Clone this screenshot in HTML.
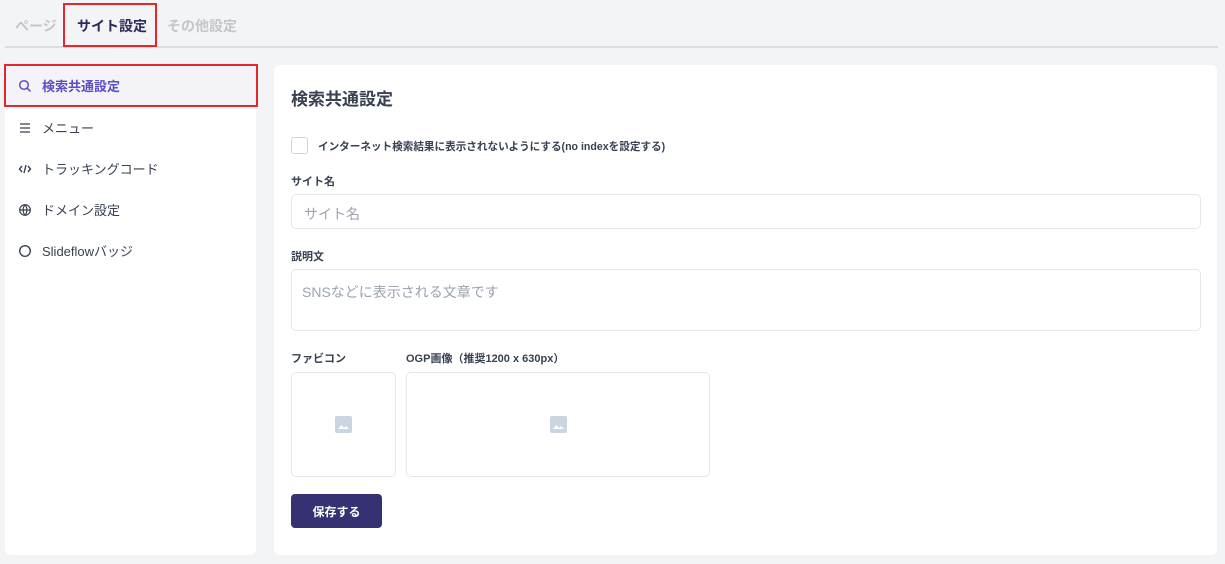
<!DOCTYPE html>
<html><head><meta charset="utf-8"><style>
*{box-sizing:border-box;margin:0;padding:0}
body{width:1225px;height:564px;background:#f3f4f6;font-family:"Liberation Sans","Noto Sans CJK JP",sans-serif;position:relative;overflow:hidden;color:#374151}
.a{position:absolute}
.tab{font-size:14px;font-weight:bold;color:#c4c6cc;top:16px}
.panel{background:#fff;border-radius:6px}
.item{position:absolute;left:18px;font-size:13px;color:#374151;display:flex;align-items:center;gap:10px}
.item svg{width:14px;height:14px}
.lbl{font-size:11px;font-weight:bold;color:#374151}
.inp{border:1px solid #e5e7eb;border-radius:5px;background:#fff}
.ph{color:#9ca3af;font-size:14px}
.imgbox{border:1px solid #e5e7eb;border-radius:5px;display:flex;align-items:center;justify-content:center}
.ic{width:17px;height:17px;background:#cbd5e1;border-radius:2px;position:relative;overflow:hidden}
</style></head><body>
<div class="a tab" style="left:15px">ページ</div>
<div class="a tab" style="left:77px;color:#2e2a5e">サイト設定</div>
<div class="a tab" style="left:167px">その他設定</div>
<div class="a" style="left:5px;top:46px;width:1213px;height:2px;background:#dcdde1"></div>
<div class="a" style="left:63px;top:3px;width:94px;height:44px;border:2px solid #e5262b"></div>

<div class="a panel" style="left:5px;top:65px;width:251px;height:490px"></div>
<div class="a" style="left:5px;top:65px;width:251px;height:41px;background:#f3f3f8"></div>
<div class="item" style="top:76px;color:#5b4fc4;font-weight:bold"><svg viewBox="0 0 14 14" fill="none" stroke="#5b4fc4" stroke-width="1.5"><circle cx="6" cy="6" r="4.3"/><path d="M9.2 9.2L12.5 12.5"/></svg>検索共通設定</div>
<div class="a" style="left:4px;top:64px;width:254px;height:43px;border:2px solid #e5262b"></div>
<div class="item" style="top:118px"><svg viewBox="0 0 14 14" stroke="#374151" stroke-width="1.2"><path d="M2 3h10M2 7h10M2 11h10"/></svg>メニュー</div>
<div class="item" style="top:159px"><svg viewBox="0 0 14 14" fill="none" stroke="#374151" stroke-width="1.4"><path d="M4 4L1.5 7 4 10M10 4l2.5 3L10 10M8 3L6 11"/></svg>トラッキングコード</div>
<div class="item" style="top:200px"><svg viewBox="0 0 14 14" fill="none" stroke="#374151" stroke-width="1.2"><circle cx="7" cy="7" r="5.3"/><path d="M1.7 7h10.6M7 1.7c-2.5 3-2.5 7.6 0 10.6M7 1.7c2.5 3 2.5 7.6 0 10.6"/></svg>ドメイン設定</div>
<div class="item" style="top:241px"><svg viewBox="0 0 14 14" fill="none" stroke="#374151" stroke-width="1.4"><circle cx="7" cy="7" r="5.3"/></svg>Slideflowバッジ</div>

<div class="a panel" style="left:274px;top:65px;width:943px;height:490px"></div>
<div class="a" style="left:291px;top:85px;font-size:17px;font-weight:bold;color:#374151">検索共通設定</div>
<div class="a" style="left:291px;top:137px;width:17px;height:17px;border:1px solid #d1d5db;border-radius:3px"></div>
<div class="a lbl" style="left:318px;top:139px;font-size:10.6px">インターネット検索結果に表示されないようにする(no indexを設定する)</div>
<div class="a lbl" style="left:291px;top:173px">サイト名</div>
<div class="a inp" style="left:291px;top:194px;width:910px;height:35px"></div>
<div class="a ph" style="left:304px;top:204px">サイト名</div>
<div class="a lbl" style="left:291px;top:248px">説明文</div>
<div class="a inp" style="left:291px;top:269px;width:910px;height:62px"></div>
<div class="a ph" style="left:302px;top:282px">SNSなどに表示される文章です</div>
<div class="a lbl" style="left:291px;top:350px">ファビコン</div>
<div class="a lbl" style="left:406px;top:350px">OGP画像（推奨1200 x 630px）</div>
<div class="a imgbox" style="left:291px;top:372px;width:105px;height:105px"><div class="ic"><svg width="17" height="17" viewBox="0 0 17 17"><path d="M3 13l3.5-4 2.5 3 2-2 3 3z" fill="#fff"/></svg></div></div>
<div class="a imgbox" style="left:406px;top:372px;width:304px;height:105px"><div class="ic"><svg width="17" height="17" viewBox="0 0 17 17"><path d="M3 13l3.5-4 2.5 3 2-2 3 3z" fill="#fff"/></svg></div></div>
<div class="a" style="left:291px;top:494px;width:91px;height:34px;background:#363172;border-radius:4px;color:#fff;font-size:12px;font-weight:bold;display:flex;align-items:center;justify-content:center">保存する</div>
</body></html>
